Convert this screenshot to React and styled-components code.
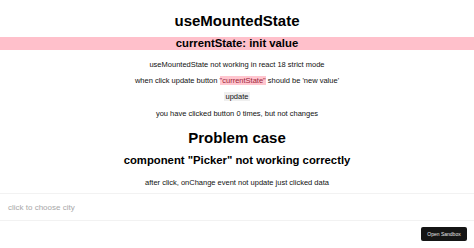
import React, { useState } from 'react';
import styled, { createGlobalStyle } from 'styled-components';

const GlobalStyle = createGlobalStyle`
  html, body {
    margin: 0;
    padding: 0;
    background: #fff;
  }
  body {
    font-family: "Liberation Sans", Arial, sans-serif;
    color: #000;
  }
`

const Page = styled.div`
  display: flex;
  flex-direction: column;
  align-items: stretch;
  text-align: center;
  padding-top: 12px;
`

const Title = styled.h1`
  font-size: 15px;
  font-weight: 700;
  line-height: 17px;
  margin: 0 0 ${p => p.$after || 8}px;
`

const StateBar = styled.h2`
  font-size: 11.3px;
  font-weight: 700;
  line-height: 13px;
  margin: 0 0 10px;
  background: pink;
`

const SubTitle = styled.h2`
  font-size: 11.3px;
  font-weight: 700;
  line-height: 13px;
  margin: 0 0 11px;
`

const Text = styled.p`
  font-size: 7.5px;
  line-height: 9px;
  margin: 0 0 ${p => p.$after || 7}px;
  color: #111;
`

const Mark = styled.span`
  background: #ffc6cf;
  color: #9c1f3a;
`

const ButtonRow = styled.div`
  display: flex;
  justify-content: center;
  margin: 0 0 8px;
`

const UpdateButton = styled.button`
  font-family: "Liberation Sans", Arial, sans-serif;
  font-size: 7.5px;
  line-height: 9px;
  padding: 0 2px;
  border: none;
  background: #efefef;
  color: #111;
  cursor: pointer;
`

const Picker = styled.div`
  display: flex;
  align-items: center;
  height: 26px;
  padding: 0 8px;
  border-top: 1px solid #f2f2f2;
  border-bottom: 1px solid #f2f2f2;
  text-align: left;
`

const Placeholder = styled.span`
  font-size: 8px;
  color: #a8a8a8;
`

const SandboxButton = styled.a`
  position: absolute;
  right: 7px;
  bottom: 7px;
  width: 46px;
  height: 14px;
  display: flex;
  align-items: center;
  justify-content: center;
  background: #151515;
  border-radius: 2px;
  color: #e8e8e8;
  font-family: "Liberation Sans", Arial, sans-serif;
  font-size: 5px;
  text-decoration: none;
`

const App = () => {
  const [count, setCount] = useState(0)

  return (
    <>
      <GlobalStyle />
      <Page>
        <Title>useMountedState</Title>
        <StateBar>currentState: init value</StateBar>
        <Text>useMountedState not working in react 18 strict mode</Text>
        <Text>
          when click update button <Mark>"currentState"</Mark> should be 'new value'
        </Text>
        <ButtonRow>
          <UpdateButton onClick={() => setCount(count + 1)}>update</UpdateButton>
        </ButtonRow>
        <Text $after={11}>you have clicked button {count} times, but not changes</Text>
        <Title $after={8}>Problem case</Title>
        <SubTitle>component "Picker" not working correctly</SubTitle>
        <Text $after={6}>after click, onChange event not update just clicked data</Text>
        <Picker>
          <Placeholder>click to choose city</Placeholder>
        </Picker>
      </Page>
      <SandboxButton href="#">Open Sandbox</SandboxButton>
    </>
  )
};

export default App;
